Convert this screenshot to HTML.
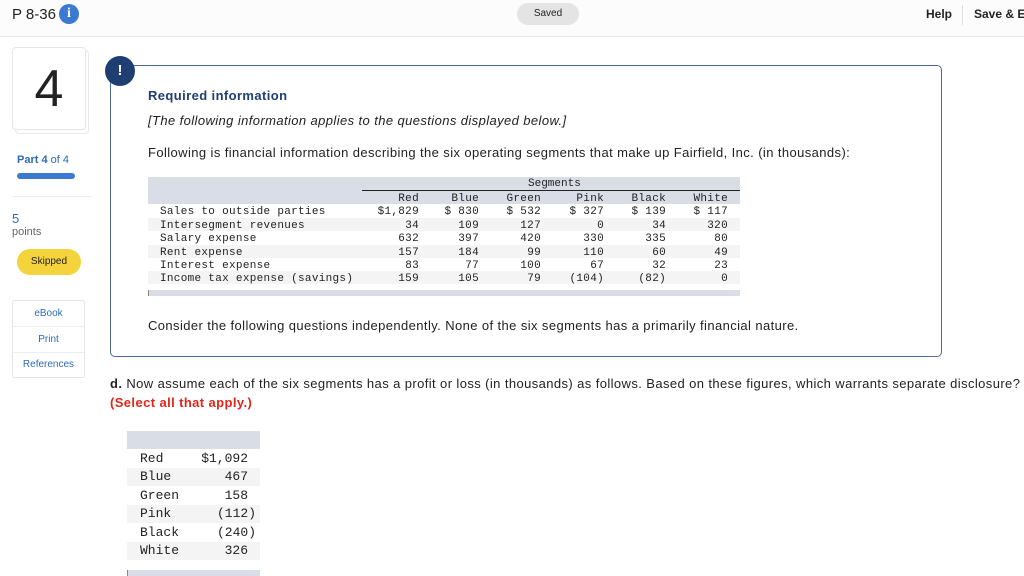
<!DOCTYPE html><html><head><style>
*{margin:0;padding:0;box-sizing:border-box}
body{width:1024px;height:576px;overflow:hidden;background:#fff;font-family:"Liberation Sans",sans-serif;position:relative;color:#222}
.a{position:absolute;white-space:nowrap}
.s{letter-spacing:0.4px}
.m{font-family:"Liberation Mono",monospace}
.t td{font-size:11px;height:13.4px;line-height:13.4px;padding:0;letter-spacing:0.3px}
.r{text-align:right}
</style></head><body>
<div class="a" style="left:0;top:0;width:1024px;height:37px;background:#fcfcfc;border-bottom:1px solid #e8e8e8"></div>
<div class="a" style="left:12px;top:6px;font-size:15px">P 8-36</div>
<div class="a" style="left:59px;top:4px;width:20px;height:20px;border-radius:50%;background:#3b7ad0;color:#fff;font:bold 14px/20px 'Liberation Serif',serif;text-align:center">i</div>
<div class="a" style="left:517px;top:3px;width:62px;height:22px;border-radius:11px;background:#e4e4e4;font-size:10px;line-height:22px;text-align:center">Saved</div>
<div class="a" style="left:926px;top:7px;font-size:12px;font-weight:bold">Help</div>
<div class="a" style="left:962px;top:5px;width:1px;height:20px;background:#e0e0e0"></div>
<div class="a" style="left:974px;top:7px;font-size:12px;font-weight:bold">Save &amp; E</div>

<div class="a" style="left:15px;top:50px;width:74px;height:84px;border:1px solid #e8e8e8;border-radius:4px"></div>
<div class="a" style="left:12px;top:47px;width:74px;height:83px;border:1px solid #e6e6e6;border-radius:4px;background:#fff;font-size:52px;text-align:center;line-height:83px">4</div>
<div class="a" style="left:17px;top:154px;font-size:11px;color:#2d6ab5"><b>Part 4</b> of 4</div>
<div class="a" style="left:17px;top:173px;width:58px;height:6px;border-radius:3px;background:#3b7ad0"></div>
<div class="a" style="left:12px;top:196px;width:80px;height:1px;background:#ececec"></div>
<div class="a" style="left:12px;top:211px;font-size:13px;color:#2d6ab5">5</div>
<div class="a" style="left:12px;top:226px;font-size:11px;color:#666">points</div>
<div class="a" style="left:17px;top:249px;width:64px;height:26px;border-radius:13px;background:#f5d33c;font-size:10px;line-height:26px;text-align:center">Skipped</div>
<div class="a" style="left:12px;top:300px;width:73px;height:78px;border:1px solid #e4e4e4;border-radius:3px;font-size:10px;color:#2d6ab5;text-align:center">
<div style="height:26px;line-height:26px;border-bottom:1px solid #eee">eBook</div>
<div style="height:26px;line-height:26px;border-bottom:1px solid #eee">Print</div>
<div style="height:24px;line-height:24px">References</div></div>

<div class="a" style="left:110px;top:65px;width:832px;height:292px;border:1px solid #4b6a9b;border-radius:5px"></div>
<div class="a" style="left:105px;top:56px;width:30px;height:30px;border-radius:50%;background:#1f3f73;color:#fff;font-weight:bold;font-size:15px;text-align:center;line-height:30px">!</div>
<div class="a s" style="left:148px;top:88px;font-size:13px;font-weight:bold;color:#1f3f73">Required information</div>
<div class="a s" style="left:148px;top:113px;font-size:13px;font-style:italic">[The following information applies to the questions displayed below.]</div>
<div class="a s" style="left:148px;top:145px;font-size:13px">Following is financial information describing the six operating segments that make up Fairfield, Inc. (in thousands):</div>

<div class="a" style="left:148px;top:177px;width:592px;height:27px;background:#d9dde6"></div>
<div class="a" style="left:148px;top:218px;width:592px;height:13px;background:#f4f4f4"></div>
<div class="a" style="left:148px;top:245px;width:592px;height:13px;background:#f4f4f4"></div>
<div class="a" style="left:148px;top:271px;width:592px;height:13px;background:#f4f4f4"></div>
<div class="a m" style="left:528px;top:178px;font-size:11px">Segments</div>
<div class="a" style="left:362px;top:190px;width:378px;height:1px;background:#222"></div>
<table class="a m t" style="left:160px;top:193px;border-collapse:collapse;width:568px">
<tr><td style="width:190px"></td><td class="r">Red</td><td class="r" style="width:60px">Blue</td><td class="r" style="width:62px">Green</td><td class="r" style="width:63px">Pink</td><td class="r" style="width:62px">Black</td><td class="r" style="width:62px">White</td></tr>
<tr><td>Sales to outside parties</td><td class="r">$1,829</td><td class="r">$ 830</td><td class="r">$ 532</td><td class="r">$ 327</td><td class="r">$ 139</td><td class="r">$ 117</td></tr>
<tr><td>Intersegment revenues</td><td class="r">34</td><td class="r">109</td><td class="r">127</td><td class="r">0</td><td class="r">34</td><td class="r">320</td></tr>
<tr><td>Salary expense</td><td class="r">632</td><td class="r">397</td><td class="r">420</td><td class="r">330</td><td class="r">335</td><td class="r">80</td></tr>
<tr><td>Rent expense</td><td class="r">157</td><td class="r">184</td><td class="r">99</td><td class="r">110</td><td class="r">60</td><td class="r">49</td></tr>
<tr><td>Interest expense</td><td class="r">83</td><td class="r">77</td><td class="r">100</td><td class="r">67</td><td class="r">32</td><td class="r">23</td></tr>
<tr><td>Income tax expense (savings)</td><td class="r">159</td><td class="r">105</td><td class="r">79</td><td class="r">(104)</td><td class="r">(82)</td><td class="r">0</td></tr>
</table>
<div class="a" style="left:148px;top:290px;width:592px;height:6px;background:#d9dde6;border-left:1px solid #888"></div>
<div class="a s" style="left:148px;top:318px;font-size:13px">Consider the following questions independently. None of the six segments has a primarily financial nature.</div>

<div class="a s" style="left:110px;top:376px;font-size:13px"><b>d.</b> Now assume each of the six segments has a profit or loss (in thousands) as follows. Based on these figures, which warrants separate disclosure?</div>
<div class="a s" style="left:110px;top:395px;font-size:13px;font-weight:bold;color:#e0261c">(Select all that apply.)</div>

<div class="a" style="left:127px;top:431px;width:133px;height:18px;background:#d9dde6"></div>
<table class="a m" style="left:127px;top:449px;width:133px;border-collapse:collapse;font-size:13px">
<tr style="height:18.5px"><td style="padding-left:13px">Red</td><td class="r" style="padding-right:12px">$1,092</td></tr>
<tr style="height:18.5px;background:#f4f4f4"><td style="padding-left:13px">Blue</td><td class="r" style="padding-right:12px">467</td></tr>
<tr style="height:18.5px"><td style="padding-left:13px">Green</td><td class="r" style="padding-right:12px">158</td></tr>
<tr style="height:18.5px;background:#f4f4f4"><td style="padding-left:13px">Pink</td><td class="r" style="padding-right:4px">(112)</td></tr>
<tr style="height:18.5px"><td style="padding-left:13px">Black</td><td class="r" style="padding-right:4px">(240)</td></tr>
<tr style="height:18.5px;background:#f4f4f4"><td style="padding-left:13px">White</td><td class="r" style="padding-right:12px">326</td></tr>
</table>
<div class="a" style="left:127px;top:570px;width:133px;height:6px;background:#d9dde6;border-left:1px solid #888"></div>
</body></html>
